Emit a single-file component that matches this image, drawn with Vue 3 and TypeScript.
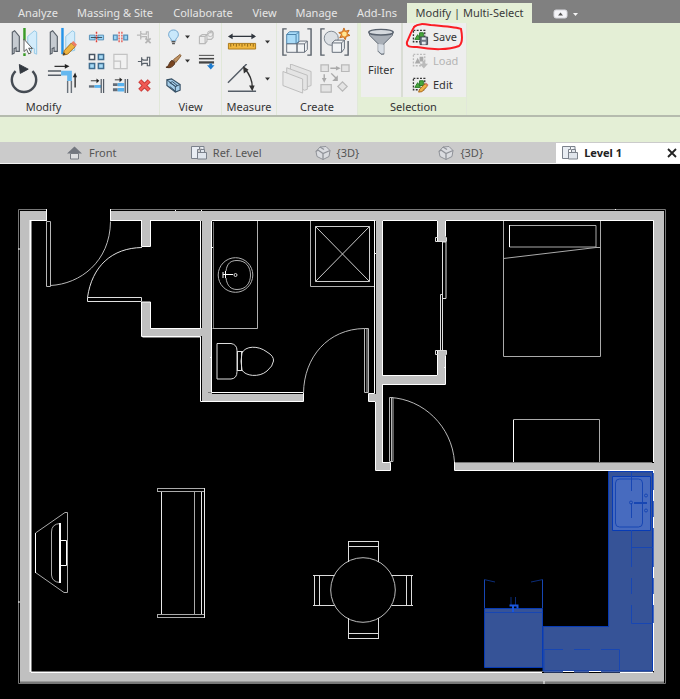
<script setup lang="ts">
import { ref } from 'vue'

const menuTabs = ['Analyze', 'Massing & Site', 'Collaborate', 'View', 'Manage', 'Add-Ins', 'Modify | Multi-Select']
const activeMenu = ref('Modify | Multi-Select')

interface ViewTab { id: number; label: string; kind: 'home' | 'plan' | 'cube' }
const viewTabs: ViewTab[] = [
  { id: 1, label: 'Front', kind: 'home' },
  { id: 2, label: 'Ref. Level', kind: 'plan' },
  { id: 3, label: '{3D}', kind: 'cube' },
  { id: 4, label: '{3D}', kind: 'cube' },
  { id: 5, label: 'Level 1', kind: 'plan' }
]
const activeView = ref(5)
</script>

<template>
  <div class="app">
    <nav class="menu" aria-label="Ribbon tabs">
      <button v-for="t in menuTabs" :key="t" type="button" class="menu-tab" :class="{ active: t === activeMenu }" @click="activeMenu = t">{{ t }}</button>
      <button type="button" class="collapse" aria-label="Minimize ribbon">
        <svg width="28" height="12" viewBox="0 0 28 12">
          <rect x="1" y="2" width="13" height="8" rx="2" fill="#f4f4f8" stroke="#d8d8de" />
          <path d="M5 7.500L7.500 4.500L10 7.500Z" fill="#555" />
          <path d="M20 5h5l-2.500 3z" fill="#f4f4f4" />
        </svg>
      </button>
    </nav>

    <header class="ribbon">
      <section class="panel modify">
        <div class="tools">
          <div class="big-grid">
            <button type="button" aria-label="Mirror - Pick Axis">
              <svg class="big" viewBox="0 0 32 32">
                <path d="M3.500 5.500L6 4L11 10V26H7.500V22L5.500 23V28L3.500 29Z" fill="#c6cbd1" stroke="#565d66" stroke-width="1.200" />
                <path d="M29.500 5.500L27 4L20 10V26H24V22L27 23V28L29.500 29Z" fill="#d3ecfb" stroke="#91c8e5" />
                <path d="M16.500 1V14M16.500 28v3" stroke="#3a9c27" stroke-width="2.600" />
                <path d="M16 13l9 10-4-.5 2.500 5-2.500 1.200-2.300-5-2.700 2.500z" fill="#fff" stroke="#555" />
              </svg>
            </button>
            <button type="button" aria-label="Mirror - Draw Axis">
              <svg class="big" viewBox="0 0 32 32">
                <path d="M3.500 5.500L6 4L11 10V26H7.500V22L5.500 23V28L3.500 29Z" fill="#c6cbd1" stroke="#565d66" stroke-width="1.200" />
                <path d="M29.500 5.500L27 4L20 10V26H24L29.500 25Z" fill="#d3ecfb" stroke="#91c8e5" />
                <path d="M16.500 1V29" stroke="#2593e8" stroke-width="2.600" />
                <path d="M17 30l1.500-5L26 17l4 4-8 8z" fill="#eeb33f" stroke="#a36a16" />
                <path d="M26 17l2-2 4 4-2 2z" fill="#ed7c65" /><path d="M17 30l1-3 2 2z" fill="#333" />
              </svg>
            </button>
            <button type="button" aria-label="Rotate">
              <svg class="big" viewBox="0 0 32 32">
                <path d="M7 7.500A13 13 0 1 0 25 7.500" fill="none" stroke="#454b53" stroke-width="2.600" />
                <path d="M11 .5l9.500 5L12 10z" fill="#333940" stroke="#333940" />
              </svg>
            </button>
            <button type="button" aria-label="Trim to Corner">
              <svg class="big" viewBox="0 0 32 32">
                <path d="M1 7.500H15M1 12H15" stroke="#565d66" stroke-width="1.500" />
                <path d="M15 9.800H24V18" fill="none" stroke="#65b8ef" stroke-width="5" />
                <path d="M22 18V31M26 18V31" stroke="#69717a" stroke-width="1.500" />
                <path d="M8 2.500H20M30 25V12" stroke="#333" stroke-width="1.500" />
                <path d="M19 0l5 2.500-5 2.500zM27.500 14L30 9l2 5z" fill="#222" />
              </svg>
            </button>
          </div>
          <div class="small-grid three">
            <button type="button" aria-label="Split Element">
              <svg class="small" viewBox="0 0 18 18">
                <path d="M1.500 6.500h6v5h-6zM10.500 6.500h6v5h-6z" fill="#9cd5f5" stroke="#528cb6" />
                <path d="M3 9h12" stroke="#3c4a56" /><path d="M9 3v12" stroke="#e03b34" stroke-width="1.500" stroke-dasharray="2 1" />
              </svg>
            </button>
            <button type="button" aria-label="Split with Gap">
              <svg class="small" viewBox="0 0 18 18">
                <path d="M1.500 6.500h4v5h-4zM12.500 6.500h4v5h-4z" fill="#9cd5f5" stroke="#528cb6" stroke-width="1.300" />
                <path d="M7.500 3v12M10.500 3v12" stroke="#e03b34" stroke-width="1.200" stroke-dasharray="2 1" />
              </svg>
            </button>
            <button type="button" aria-label="Unpin" disabled>
              <svg class="small" viewBox="0 0 18 18">
                <path d="M1 6.500h4M5 2v9M5 4.500l2 1h4V3h2v8h-2V8H7L5 9" fill="none" stroke="#b9b9b9" stroke-width="1.300" />
                <path d="M10 10l5.500 5M15.500 10L10 15" stroke="#b5b5b5" stroke-width="1.800" />
              </svg>
            </button>
            <button type="button" aria-label="Array">
              <svg class="small" viewBox="0 0 18 18">
                <path d="M1.500 1.500h5.500v5.500h-5.500z" fill="#fff" stroke="#495563" stroke-width="1.600" />
                <path d="M11 1.500h5.500v5.500H11zM1.500 11h5.500v5.500h-5.500zM11 11h5.500v5.500H11z" fill="#a7dbf7" stroke="#406e91" stroke-width="1.600" />
              </svg>
            </button>
            <button type="button" aria-label="Scale" disabled>
              <svg class="small" viewBox="0 0 18 18"><path d="M2 1.500h14V16.500H2zM2 8.500h7v8" fill="#f1f1f1" stroke="#c3c3c3" stroke-width="1.300" /></svg>
            </button>
            <button type="button" aria-label="Pin">
              <svg class="small" viewBox="0 0 18 18"><path d="M2 9h4M6 4.500v9M6 6.500l2 1h4V4.500h2.500v9H12V11H8l-2 1" fill="#eee" stroke="#59616a" stroke-width="1.300" /></svg>
            </button>
            <button type="button" aria-label="Trim Single">
              <svg class="small" viewBox="0 0 18 18"><path d="M3 4h7" stroke="#333" /><path d="M9 1.500l3 2.500-3 2.500z" fill="#222" /><path d="M1 10h6" stroke="#646d78" stroke-width="2.500" /><path d="M7 10h7" stroke="#57b2ef" stroke-width="3" /><path d="M14 2v15M16.500 2v15" stroke="#535b65" stroke-width="1.300" /></svg>
            </button>
            <button type="button" aria-label="Trim Multiple">
              <svg class="small" viewBox="0 0 18 18"><path d="M3 3h6" stroke="#333" /><path d="M8 .5l3 2.500L8 5.500z" fill="#222" /><path d="M1 8h5M1 13.500h5" stroke="#646d78" stroke-width="3" /><path d="M6 8h7M6 13.500h7" stroke="#57b2ef" stroke-width="3.500" /><path d="M14 2v15M16.500 2v15" stroke="#535b65" stroke-width="1.300" /></svg>
            </button>
            <button type="button" aria-label="Delete">
              <svg class="small" viewBox="0 0 18 18"><path d="M4 4l10 10M14 4L4 14" stroke="#b92c2a" stroke-width="4.500" /><path d="M4 4l10 10M14 4L4 14" stroke="#ef5a55" stroke-width="2.800" /></svg>
            </button>
          </div>
        </div>
        <h2>Modify</h2>
      </section>

      <section class="panel view">
        <div class="tools">
          <div class="small-grid view-grid">
            <button type="button" aria-label="Hide in View"><svg class="small" viewBox="0 0 18 18"><path d="M6.500 10.500C2 7.500 3.500 1 9 1s7 6.500 2.500 9.500v2h-5z" fill="#c9e8fb" stroke="#6ba1cb" /><path d="M7 13.500h4M7.500 15.500h3" stroke="#555" stroke-width="1.500" /></svg></button>
            <button type="button" aria-label="Hide options"><svg class="arrow" viewBox="0 0 6 6"><path d="M0 1.500h5L2.500 4.500z" fill="#333" /></svg></button>
            <button type="button" aria-label="Displace" disabled><svg class="small" viewBox="0 0 18 18"><path d="M1.500 8l3-2h5v7l-2 2.500h-6zM1.500 8h6l2-2M7.500 8v7.500M10 6l2-2h4v5l-2 2h-4M12 4l2-2 2 1" fill="#ededed" stroke="#b9b9b9" stroke-width="1.200" /><circle cx="13" cy="5" r="3" fill="none" stroke="#b9b9b9" /></svg></button>
            <button type="button" aria-label="Override Graphics"><svg class="small" viewBox="0 0 18 18"><path d="M9 7l7-5.500L17 3l-5.500 7z" fill="#be9364" stroke="#875c34" /><path d="M1 15c3 0 3-5 6-7 3 0 4 2 3 4-3 4-6 4-9 3z" fill="#794521" stroke="#4a2c17" /></svg></button>
            <button type="button" aria-label="Override options"><svg class="arrow" viewBox="0 0 6 6"><path d="M0 1.500h5L2.500 4.500z" fill="#333" /></svg></button>
            <button type="button" aria-label="Linework"><svg class="small" viewBox="0 0 18 18"><path d="M1 2.500h16" stroke="#444" /><path d="M1 6h16" stroke="#444" stroke-width="1.600" /><path d="M1 10h16" stroke="#444" stroke-width="2.400" /><path d="M12 11h3v2h2.500L13.500 17.500L9.500 13h2.500z" fill="#1c7cd0" /></svg></button>
            <button type="button" aria-label="Selection Box"><svg class="small" viewBox="0 0 18 18"><path d="M2 3l5-1 9 6v6l-5 2-9-7z" fill="#a5cde9" stroke="#344e63" stroke-width="1.200" /><path d="M2 3l9 7 5-2M11 10v6M5 6l3-1 5 4-2 1zM5 10l6 5" fill="none" stroke="#344e63" /></svg></button>
          </div>
        </div>
        <h2>View</h2>
      </section>

      <section class="panel measure">
        <div class="tools">
          <div class="big-grid measure-grid">
            <button type="button" aria-label="Measure Between Two References"><svg class="big" viewBox="0 0 32 32"><path d="M4 10h24" stroke="#30363e" stroke-width="1.400" /><path d="M1 10l5-3v6zM31 10l-5-3v6z" fill="#30363e" /><path d="M1.500 17.500h29v6h-29z" fill="#f0b63d" stroke="#a97618" /><path d="M4 18v3M7 18v2M10 18v3M13 18v2M16 18v3M19 18v2M22 18v3M25 18v2M28 18v3" stroke="#8b6418" /></svg></button>
            <button type="button" aria-label="Measure options"><svg class="arrow" viewBox="0 0 6 6"><path d="M0 1.500h5L2.500 4.500z" fill="#333" /></svg></button>
            <button type="button" aria-label="Angular Dimension"><svg class="big" viewBox="0 0 32 32"><path d="M1 20L21 0M1 29h30" stroke="#565e68" stroke-width="1.600" /><path d="M19 5q8 9 8 20" fill="none" stroke="#333" stroke-width="1.500" /><path d="M17 2l6 4-5 4zM23.500 23h6L27 29z" fill="#333" /></svg></button>
            <button type="button" aria-label="Dimension options"><svg class="arrow" viewBox="0 0 6 6"><path d="M0 1.500h5L2.500 4.500z" fill="#333" /></svg></button>
          </div>
        </div>
        <h2>Measure</h2>
      </section>

      <section class="panel create">
        <div class="tools">
          <div class="big-grid">
            <button type="button" aria-label="Create Assembly"><svg class="big" viewBox="0 0 32 32"><path d="M5 2H1V30H5M27 2h4V30H27" fill="none" stroke="#59616a" stroke-width="1.500" /><path d="M5 8l3-3h10v10l-3 3H5z" fill="#a9dbf8" stroke="#477fa8" /><path d="M5 8h10l3-3M15 8v10" fill="none" stroke="#477fa8" /><path d="M5 18h11v9H5zM16 18l3-3h8v9l-3 3h-8z" fill="#f1f3f5" stroke="#626b76" /><path d="M16 18h8l3-3M24 18v9" fill="none" stroke="#626b76" /></svg></button>
            <button type="button" aria-label="Create Group"><svg class="big" viewBox="0 0 32 32"><path d="M5 2H1V30H5M26 30h4V15" fill="none" stroke="#59616a" stroke-width="1.500" /><circle cx="12" cy="12" r="7.500" fill="#dce0e4" stroke="#7b848e" /><path d="M13 17l3-3h10v9l-3 4H13z" fill="#f1f3f5" stroke="#606974" /><path d="M13 17h10l3-3M23 17v10" fill="none" stroke="#606974" /><path d="M25.500 1l1.500 3.500 4-1-2 3.500 3 2-4 1-1 3.500-2-3-4 1 2-3.500-3-2 4-1z" fill="#f0953a" stroke="#c36b18" /><circle cx="26" cy="7.500" r="2.500" fill="#ffe794" /></svg></button>
            <button type="button" aria-label="Create Parts" disabled><svg class="big" viewBox="0 0 32 32"><path d="M9 0L31 8V23L28 24L9 15Z" fill="#e4e4e4" stroke="#bbb" /><path d="M5 4L27 12V27L24 28L5 19Z" fill="#e4e4e4" stroke="#bbb" /><path d="M1 8L22 16V31L1 23Z" fill="#e9e9e9" stroke="#bbb" /></svg></button>
            <button type="button" aria-label="Create Similar" disabled><svg class="big" viewBox="0 0 32 32"><path d="M1 1h8v7H1zM23 1h8v7h-8zM1 22h11v8H1zM19 24l5-5 5 5-5 5z" fill="#e4e4e4" stroke="#b9b9b9" stroke-width="1.300" /><path d="M11 4.500h7M4.500 11v6M12 10l5 5" stroke="#aaa" stroke-width="1.500" /><path d="M17 2l5 2.500-5 2.500zM2 15h5l-2.500 5zM19 12v6h-6z" fill="#aaa" /></svg></button>
          </div>
        </div>
        <h2>Create</h2>
      </section>

      <section class="panel selection">
        <div class="tools">
          <button type="button" class="filter">
            <svg class="big" viewBox="0 0 32 32"><path d="M3 5l1 4 9 9v8l3 3h3v-11l9-9 1-4z" fill="#a9afb7" stroke="#5b646f" /><path d="M13 18l6 1v9h-3l-3-3z" fill="#d7dde4" /><ellipse cx="16" cy="5.500" rx="13" ry="3" fill="#d5d9de" stroke="#59626e" stroke-width="1.500" /></svg>
            Filter
          </button>
          <div class="set-list">
            <button type="button">
              <svg class="small" viewBox="0 0 18 18"><path d="M1.500 1.500h12v12h-12z" fill="none" stroke="#333" stroke-width="1.400" stroke-dasharray="2 1.500" /><path d="M3 11l3-5 3 5zM8 4h4v5H8z" fill="#49a83b" stroke="#257824" /><path d="M8.500 8.500h8v8h-8z" fill="#6e7986" stroke="#3f4852" /><path d="M10.500 9h4v2.500h-4zM10.500 13.500h4v3h-4z" fill="#e3e8ed" /></svg>
              Save
            </button>
            <button type="button" disabled>
              <svg class="small" viewBox="0 0 18 18"><path d="M1.500 1.500h12v12h-12z" fill="none" stroke="#bbb" stroke-width="1.400" stroke-dasharray="2 1.500" /><path d="M3 11l3-6 3 6zM8 4h4v5H8z" fill="#aaa" /><path d="M11 8.500h3v3h3l-4.500 5L8 11.500h3z" fill="#bbb" /></svg>
              Load
            </button>
            <button type="button">
              <svg class="small" viewBox="0 0 18 18"><path d="M1.500 1.500h12v12h-12z" fill="none" stroke="#333" stroke-width="1.400" stroke-dasharray="2 1.500" /><path d="M3 11l3-5 3 5zM8 4h4v5H8z" fill="#49a83b" stroke="#257824" /><path d="M7 16l1-3 6-6 2.500 2.500-6 6z" fill="#eeb249" stroke="#a86517" /><path d="M14 7l1-1 2.500 2.500-1 1z" fill="#d77161" /></svg>
              Edit
            </button>
            <svg class="markup" viewBox="0 0 60 30" aria-hidden="true"><path d="M10 3C6 8 4 15 2 19C1 24 5 24 12 24C27 27 44 27 54 23C58 20 57 11 56 6C52 4 35 3 26 2C19 1 13 0 9 4" fill="none" stroke="#fb1d24" stroke-width="2" stroke-linecap="round" /></svg>
          </div>
        </div>
        <h2>Selection</h2>
      </section>
    </header>

    <div class="options"></div>

    <nav class="view-tabs" aria-label="Open views">
      <div v-for="t in viewTabs" :key="t.id" class="view-tab" :class="{ active: t.id === activeView }">
        <button type="button" class="view-name" @click="activeView = t.id">
          <svg v-if="t.kind === 'home'" class="doc" viewBox="0 0 16 16"><path d="M0 8.500L7.500 1.500L15 8.500Z" fill="#73777f" /><path d="M3.500 8.500h8v5.500h-8z" fill="#dedfe1" stroke="#777b82" /></svg>
          <svg v-else-if="t.kind === 'plan'" class="doc" viewBox="0 0 16 16"><path d="M.5 1.500h8v3h-2v9h-6zM8.500 1.500H13v4" fill="#e9edf3" stroke="#7b818b" /><path d="M6.500 7.500h9v6.500h-9zM9.500 7V4.500h4V7" fill="#e0e5ec" stroke="#7b818b" /></svg>
          <svg v-else class="doc" viewBox="0 0 16 16"><path d="M1 6.500L5 2l6-.5 4 4-1 6-6 3-6-3z" fill="#dadce0" stroke="#909399" /><path d="M1 6.500l2-1.500 5 3.500 7-3M8 8.500v6M5 2l4 2.500" fill="none" stroke="#909399" stroke-width="1.300" /></svg>
          <span>{{ t.label }}</span>
        </button>
        <button v-if="t.id === activeView" type="button" class="close" aria-label="Close view">
          <svg width="12" height="12" viewBox="0 0 12 12"><path d="M2 2l8 8M10 2l-8 8" stroke="#222" stroke-width="1.800" /></svg>
        </button>
      </div>
    </nav>

    <main class="canvas">
      <svg class="plan" viewBox="0 164 680 535" role="img" aria-label="Level 1 floor plan">
        <!-- outer walls -->
        <g fill="#c0c0c0">
          <path d="M20 211H47V221H30V673H654V221H110V211H664V682H20Z" />
          <path d="M142 221h8v26h-8zM142 302h8v26h52v8h-60zM202 221h10v173h92v7h-102zM376 221h7v155h55v-25h8v33h-63v79h7v7h-14v-69h-8v-7h8zM438 221h8v20h-8zM454 463h200v7H454z" />
        </g>
        <g fill="none" stroke="#777">
          <path d="M47 209.500H18.500V683.500H665.500V209.500H110.500" />
          <path d="M20 682.500H664" stroke-width="2" />
          <path d="M31 671.500H653M142.500 337.500H200M213.500 222V328M208 392.500H304M454 462.500H652" />
        </g>
        <g fill="none" stroke="#fff">
          <path d="M46.500 209V220.500H30.500V672.500H542M110.500 209V220.500H142M150 220.500H200M212 220.500H375M383 220.500H437M446 220.500H653.500V462M653.500 470V473" />
          <path d="M30.500 220V672" stroke-width="2" />
          <path d="M141.500 221V246.500H150.500V221M142 302H150.500V328.500H200.500V221M141.500 302V336.500H200.500V401.500H303.500V392.500H211.500V221" />
          <path d="M374.500 221V393.500H368.500V401.500H375.500V470.500H390.500V462.500H382.500V384.500H445.500V350.500H437.500V375.500H382.500V221M437.500 221V241.500H445.500V221M454.500 462V470.500H653" />
          <path d="M620 672.500H653.500M175 210.500h1M201 210.500h1M615 209.500h1M18 249h2M18 602h2M544 681v3M211 247.500h2M210 357.500h2M444 367.500h2M374 253.500h2" />
        </g>

        <!-- doors -->
        <g fill="none" stroke="#b8b8b8">
          <path d="M46.500 221.500h4v65h-4zM50.500 285.500C80 284 110 262 110.500 221.500" />
          <path d="M87.500 297.500h54v4h-54zM87.500 297.500C92 266 112 248 142 247.500" stroke="#e0e0e0" />
          <path d="M364.500 328.500h4v64h-4zM367 328.500v64M364.500 328.500C328 329 304 357 303.500 393" />
          <path d="M389.500 397.500h3.500v64h-3.500zM391.500 397.500v64M390 397.500C423 399 452 426 454.500 462" />
          <path d="M435.500 237.500h11v4h-11zM435.500 350.500h11v4h-11zM442.500 242v108M442.500 242h3.500v56.500h-3.500M440.500 294.500h2v56h-2z" stroke="#ddd" />
        </g>
        <path d="M438 236h8v5h-8zM438 351h8v5h-8z" fill="#c0c0c0" />

        <!-- bathroom -->
        <g fill="none" stroke="#b0b0b0">
          <path d="M212.500 328.500H257.500V221M310.500 221V286.500H374" />
          <path d="M315.500 226.500h54v55h-54zM315.500 226.500l54 55M369.500 226.500l-54 55" stroke="#ccc" />
          <circle cx="235.500" cy="275" r="17.300" />
          <path d="M226 271C227 263 231 260.500 237 260.500C246 260.500 250.500 267 250.500 275S246 289.500 237 289.500C231 289.500 227 286 226 278" />
          <path d="M223 274.500h10M223 272v6M225.500 271v7" stroke="#fff" /><circle cx="235.500" cy="275" r="1.500" stroke="#ddd" />
          <path d="M217 343.500h14q6 1 6 7v21q0 7-6 7.500H217zM237 351.500h6M237 370.500h5M237.500 351v20M241.500 352v18" stroke="#ddd" />
          <path d="M242 353C245 346 258 345 267 352Q274 356 273.500 361T267 371C259 378 245 376 242 370Q240 361 242 353Z" stroke="#ddd" />
        </g>

        <!-- bedroom -->
        <g fill="none" stroke="#aaa">
          <path d="M503.500 221V356.500H600.500V221M509.500 225.500h86.500v21.500h-86.500zM503.500 258.500L596 247.500h5M513.500 462V419.500H599.500V462" />
          <path d="M509.500 225v22M513.500 420v42" stroke="#fff" />
        </g>

        <!-- living room -->
        <g fill="none" stroke="#aaa">
          <path d="M35.500 533L65 512.500H67.500V592.500H64L35.500 572.500Z" />
          <path d="M35.500 533v40" stroke="#fff" />
          <path d="M60 523.500Q51.500 524 51.500 532V575Q52 582 60 582.500" /><path d="M60 523v60" stroke="#fff" stroke-width="2" /><path d="M60 540.500h6.500v25H60" stroke="#fff" />
          <path d="M158 488.500H204.500M158 491.500H204.500M157.500 488v4M158 614.500H204.500M158 617.500H204.500M157.500 614v4M194.500 492v122" />
          <path d="M161.500 492v122M201.500 492v122M204.500 488v130" stroke="#e8e8e8" />
        </g>
        <g fill="none" stroke="#ddd">
          <circle cx="363" cy="590" r="32.300" stroke="#bbb" />
          <path d="M348.500 562v-21M378.500 562v-21M348 541.500h31M348 546.500h31M348.500 618v21M378.500 618v21M348 633.500h31M348 638.500h31" />
          <path d="M334.500 575.500H313M334.500 605.500H313M314.500 575v31M319.500 575v31M391.500 575.500H413M391.500 605.500H413M406.500 575v31M411.500 575v31" />
        </g>

        <!-- kitchen, selected -->
        <g fill="#365397" stroke="#073bb5">
          <path d="M608.500 471.500H652.500V671H543V626.500H608.500Z" />
          <path d="M484.500 608.500h58v59h-58z" />
          <path d="M612.500 476.500h38v54h-38z" fill="#476bbf" />
          <g fill="none" stroke="#1746b3">
            <path d="M484.500 612.500h58M484.500 608V580M542.500 608V580" />
            <path d="M484 579.500l11 2.500M531 582l12-2.500M511 597v8M515.500 597v8" stroke="#0b2c78" />
            <rect x="615.500" y="479" width="27" height="48" rx="4" />
            <circle cx="631" cy="502.500" r="1.500" /><circle cx="646" cy="495.500" r="1.500" /><circle cx="646" cy="510.500" r="1.500" />
            <path d="M634 503h13" stroke-width="2" />
            <path d="M631.500 472h21M631.500 472v19M631.500 503v15M631.500 530v37M631.500 578v16M631.500 605v18.500h22M631 547.500h22" />
            <path d="M544 670V649.500H563M574 649.500h16M601 649.500h18.500V671" />
            <path d="M513 606v6M509.500 605.500h8v3" stroke="#1b57dd" stroke-width="2" />
          </g>
        </g>
        <path d="M653.500 473v17M653.500 501v16M653.500 528v39M653.500 578v16M653.500 605v18M544 672h19M574 672h15M601 672h19" stroke="#4769bd" />
        <path d="M653.500 490v11M653.500 517v11M653.500 567v11M653.500 594v11M653.500 623v48M563 671.500h11M589 671.500h12" stroke="#fff" />
      </svg>
    </main>
  </div>
</template>

<style>
html, body { margin: 0; background: #000; }
</style>

<style scoped>
.app { min-height: 100vh; display: flex; flex-direction: column; font-family: "Noto Sans", "Open Sans", sans-serif; font-size: 11px; line-height: 16px; color: #333; background: #000; }
button { border: 0; margin: 0; padding: 0; background: none; font: inherit; color: inherit; display: flex; align-items: center; justify-content: center; white-space: nowrap; }
svg { display: block; flex: none; }

.menu { display: grid; grid-template-columns: 58px 96px 80px 43px 61px 60px 125px 70px; height: 23px; padding-left: 9px; background: #808080; color: #e6e6e6; box-sizing: border-box; }
.menu-tab { padding-top: 3px; }
.menu-tab.active { margin-top: 3px; padding-top: 0; background: #e4efd6; color: #3a3a3a; }
.collapse { padding-top: 4px; }

.ribbon { display: flex; height: 92px; background: #e4efd6; border-bottom: 2px solid #b5bbae; }
.panel { display: flex; flex-direction: column; background: #eee; border-right: 1px solid #e1e8d9; box-sizing: border-box; }
.tools { display: flex; height: 74px; }
h2 { flex: 1; margin: 0; padding-top: 1px; font-size: 11px; line-height: 17px; font-weight: 400; text-align: center; }
.modify { width: 160px; }
.modify h2 { padding-right: 72px; }
.view { width: 62px; }
.measure { width: 55px; }
.create { width: 81px; }
.selection { width: 109px; border-left: 3px solid #e4efd6; }
.selection h2 { background: #e4efd6; }

.big { width: 30px; height: 30px; }
.small { width: 17px; height: 17px; }
.arrow { width: 6px; height: 6px; }
.big-grid { display: grid; grid-template-columns: 38px 38px; grid-template-rows: 37px 37px; padding-left: 1px; }
.modify .big-grid { padding-left: 5px; }
.big-grid.measure-grid { grid-template-columns: 38px 14px; }
.small-grid { display: grid; grid-template-rows: 24px 24px 24px; padding-top: 2px; padding-left: 1px; }
.three { grid-template-columns: 24px 24px 24px; padding-left: 3px; }
.view-grid { grid-template-columns: 24px 6px 30px; }

.filter { flex-direction: column; justify-content: flex-start; gap: 5px; width: 40px; padding-top: 4px; border-right: 2px solid #d9ddd4; box-sizing: content-box; }
.set-list { position: relative; flex: 1; display: grid; grid-template-rows: 24px 24px 24px; padding-top: 2px; padding-left: 9px; }
.set-list button { justify-content: flex-start; gap: 4px; }
.set-list button:disabled { color: #b4b4b4; }
.markup { position: absolute; left: 2px; top: 0; width: 60px; height: 30px; pointer-events: none; }

.options { height: 25px; background: #e4efd6; }
.view-tabs { display: grid; grid-template-columns: repeat(5, 1fr); height: 22px; padding-left: 61px; box-sizing: border-box; background: #cbcbcb; border-bottom: 1px solid #f4f4f4; }
.view-tab { display: flex; justify-content: space-between; padding: 0 2px 0 6px; color: #555; }
.view-tab.active { background: #fff; margin-top: 1px; color: #222; font-weight: 700; }
.view-name { gap: 6px; }
.doc { width: 16px; height: 16px; }
.close { width: 12px; }

.canvas { flex: 1; background: #000; }
.plan { width: 100%; height: auto; }
</style>
